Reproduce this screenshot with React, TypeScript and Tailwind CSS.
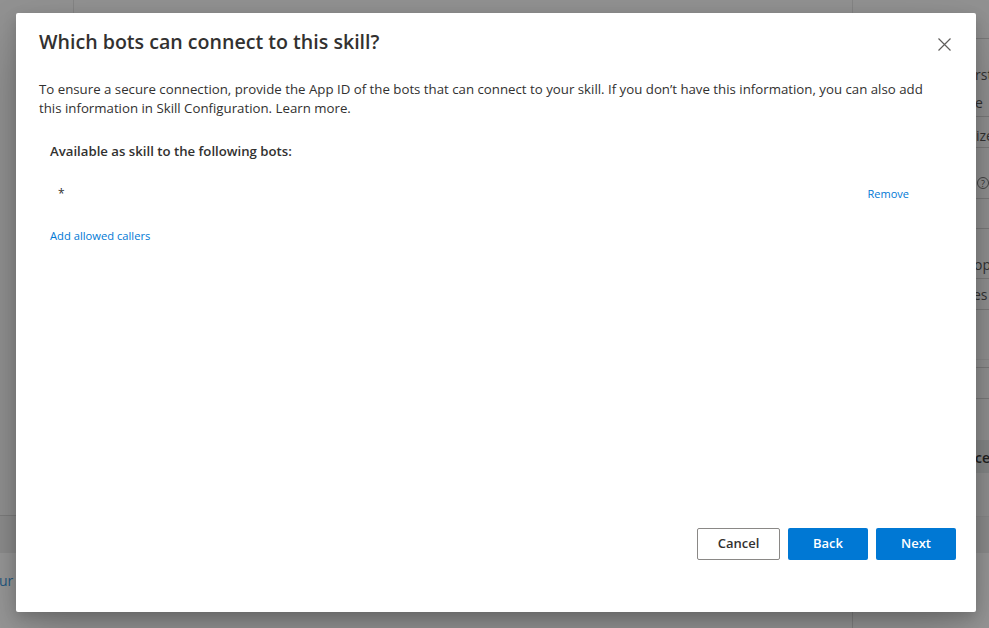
import React from "react";

const font = { fontFamily: '"Open Sans", "Noto Sans", Arial, sans-serif' };

function RightRow({ h, text, border = "border-[#7b7b7b]", extra = "" }: { h: string; text?: React.ReactNode; border?: string; extra?: string }) {
  return (
    <div className={`${h} border-b ${border} flex items-center whitespace-nowrap overflow-hidden pl-[123px] text-[14px] text-[#333] ${extra}`}>
      {text}
    </div>
  );
}

export default function App() {
  return (
    <div className="relative w-[989px] h-[628px] overflow-hidden bg-[#929292]" style={font}>
      {/* background page (under overlay) */}
      <div className="flex h-full">
        <div className="flex-1 flex flex-col">
          <div className="h-[516px] flex border-b border-[#7e7e7e]">
            <div className="w-[74px] border-r border-[#858585]" />
            <div className="flex-1" />
          </div>
          <div className="h-[37px] bg-[#8e8e8e]" />
          <div className="flex-1 bg-[#999999] flex items-start pt-[17px]">
            <span className="text-[14px] text-[#245983] whitespace-nowrap -ml-[1px]">ur bot settings</span>
          </div>
        </div>
        <div className="w-[137px] border-l border-[#858585] flex flex-col">
          <div className="h-[39px] border-b border-[#7b7b7b]" />
          <div className="h-[78px] border-b border-[#7b7b7b] flex flex-col pt-[26px] pl-[122px] text-[14px] text-[#333] whitespace-nowrap overflow-hidden">
            <div className="leading-[20px]">rst</div>
            <div className="leading-[20px] mt-[8px]">e</div>
          </div>
          <div className="h-[31px] border-b border-[#7b7b7b] whitespace-nowrap overflow-hidden pl-[123px] text-[14px] text-[#333] leading-[38px]">ize</div>
          <RightRow
            h="h-[51px]"
            text={
              <span className="ml-[1px] mt-[20px] inline-flex w-[12px] h-[12px] rounded-full border border-[#444] items-center justify-center text-[9px] leading-none text-[#333]">
                ?
              </span>
            }
          />
          <RightRow h="h-[30px]" />
          <div className="h-[50px] border-b border-[#7b7b7b] whitespace-nowrap overflow-hidden pl-[121px] text-[14px] text-[#333] leading-[14px] pt-[29px]">op</div>
          <RightRow h="h-[31px]" text={<span className="-ml-[3px]">es</span>} />
          <div className="h-[50px] border-b border-[#8a8a8a]" />
          <div className="h-[8px] border-b border-[#7b7b7b]" />
          <div className="h-[31px] border-b border-[#7b7b7b]" />
          <div className="h-[41px]" />
          <div className="h-[33px] bg-[#868888] whitespace-nowrap overflow-hidden pl-[122px] text-[14px] font-semibold text-[#222] leading-[35px]">ce</div>
          <div className="h-[44px] border-b border-[#8a8a8a]" />
          <div className="h-[36px] bg-[#8e8e8e]" />
          <div className="flex-1 bg-[#999999]" />
        </div>
      </div>

      {/* dialog */}
      <div className="absolute left-[16px] top-[13px] w-[960px] h-[599px] bg-white rounded-[2px] flex flex-col shadow-[0_25px_58px_rgba(0,0,0,0.22),0_5px_14px_rgba(0,0,0,0.18)]">
        <div className="flex items-start justify-between pl-[23px] pr-[25px] pt-[15px]">
          <h1 className="text-[19.6px] leading-[28px] font-semibold text-[#323130]">Which bots can connect to this skill?</h1>
          <button className="mt-[10px] w-[13px] h-[13px] flex items-center justify-center text-[#605e5c]" aria-label="Close">
            <svg width="13" height="13" viewBox="0 0 13 13" fill="none" stroke="#605e5c" strokeWidth="1.2">
              <path d="M0.5 0.5 L12.5 12.5 M12.5 0.5 L0.5 12.5" />
            </svg>
          </button>
        </div>
        <p className="pl-[23px] pr-[40px] mt-[24px] text-[13.25px] leading-[19px] text-[#323130]">
          To ensure a secure connection, provide the App ID of the bots that can connect to your skill. If you don’t have this information, you can also add this information in Skill Configuration. Learn more.
        </p>
        <div className="pl-[34px] pr-[67px] mt-[23px]">
          <div className="text-[13.2px] leading-[20px] font-semibold text-[#323130]">Available as skill to the following bots:</div>
          <div className="flex items-center justify-between mt-[23px] h-[20px]">
            <span className="pl-[8px] text-[12px] text-[#323130]">*</span>
            <button className="text-[11px] text-[#0078d4]">Remove</button>
          </div>
          <button className="mt-[24px] text-[11.2px] text-[#0078d4]">Add allowed callers</button>
        </div>
        <div className="mt-auto flex justify-end gap-[8px] pr-[20px] pb-[52px]">
          <button className="w-[83px] h-[32px] rounded-[2px] border border-[#8a8886] bg-white text-[13px] font-semibold text-[#323130]">Cancel</button>
          <button className="w-[80px] h-[32px] rounded-[2px] bg-[#0078d4] text-[13px] font-semibold text-white">Back</button>
          <button className="w-[80px] h-[32px] rounded-[2px] bg-[#0078d4] text-[13px] font-semibold text-white">Next</button>
        </div>
      </div>
    </div>
  );
}
